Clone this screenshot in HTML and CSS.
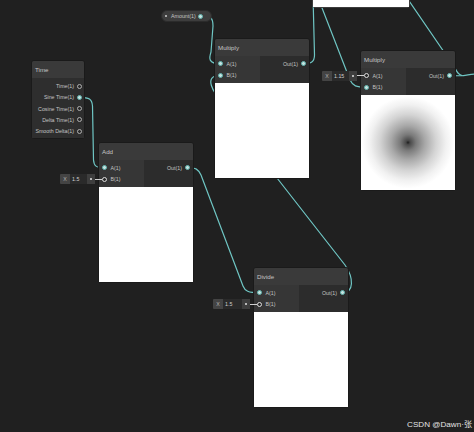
FILE: index.html
```html
<!DOCTYPE html>
<html>
<head>
<meta charset="utf-8">
<link rel="stylesheet" href="styles.css">
</head>
<body>
<div class="canvas">
  <svg class="edges" width="474" height="432" viewBox="0 0 474 432">
    <g fill="none" stroke="#6fc6c4" stroke-width="1.2">
      <path d="M 202 16 C 211 16, 213 18, 213 26 L 211 52 C 209 58, 208 63.75, 220.5 63.75"/>
      <path d="M 80 97.4 C 89 97.4, 92 99, 92.5 106 L 93.5 160 C 94 166, 96 167.75, 104.5 167.75"/>
      <path d="M 187.5 167.75 C 196 167.75, 198 169, 201 175 L 243 286 C 245 291, 248 292.75, 259.5 292.75"/>
      <path d="M 342.5 292.75 C 354 292.75, 354 278, 345 265 L 277 178 L 225 105 C 212 92, 203 75.25, 220.5 75.25"/>
      <path d="M 303.5 63.75 C 311 63.75, 314.5 62, 314.5 55 L 313 -5"/>
      <path d="M 317 -5 L 350 80 C 353 86, 356 87.25, 366.5 87.25"/>
      <path d="M 449.5 75.75 L 460 75.75 C 466 75.75, 470 74, 476 74"/>
      <path d="M 405 -5 L 455 68 C 457 72, 458 74.5, 462 75.5"/>
    </g>
  </svg>

  <div class="node topnode">
    <div class="preview"></div>
  </div>

  <div class="prop">
    <span class="pdot"></span>
    <span class="plabel">Amount(1)</span>
    <span class="dot c"></span>
  </div>

  <div class="node time">
    <div class="hdr">Time</div>
    <div class="tbody">
      <div class="port"><span>Time(1)</span><span class="dot o"></span></div>
      <div class="port"><span>Sine Time(1)</span><span class="dot c"></span></div>
      <div class="port"><span>Cosine Time(1)</span><span class="dot o"></span></div>
      <div class="port"><span>Delta Time(1)</span><span class="dot o"></span></div>
      <div class="port"><span>Smooth Delta(1)</span><span class="dot o"></span></div>
    </div>
  </div>

  <div class="node mul1">
    <div class="hdr">Multiply</div>
    <div class="body">
      <div class="ins">
        <div class="port"><span class="dot c"></span><span>A(1)</span></div>
        <div class="port"><span class="dot c"></span><span>B(1)</span></div>
      </div>
      <div class="outs">
        <div class="port"><span>Out(1)</span><span class="dot c"></span></div>
      </div>
    </div>
    <div class="preview"></div>
  </div>

  <div class="node mul2">
    <div class="hdr">Multiply</div>
    <div class="body">
      <div class="ins">
        <div class="port">
          <div class="field"><span class="fx">X</span><span class="fv">1.15</span><span class="fd"></span><span class="wire"></span></div>
          <span class="dot d"></span><span>A(1)</span>
        </div>
        <div class="port"><span class="dot c"></span><span>B(1)</span></div>
      </div>
      <div class="outs">
        <div class="port"><span>Out(1)</span><span class="dot c"></span></div>
      </div>
    </div>
    <div class="preview radial"></div>
  </div>

  <div class="node add">
    <div class="hdr">Add</div>
    <div class="body">
      <div class="ins">
        <div class="port"><span class="dot c"></span><span>A(1)</span></div>
        <div class="port">
          <div class="field"><span class="fx">X</span><span class="fv">1.5</span><span class="fd"></span><span class="wire"></span></div>
          <span class="dot d"></span><span>B(1)</span>
        </div>
      </div>
      <div class="outs">
        <div class="port"><span>Out(1)</span><span class="dot c"></span></div>
      </div>
    </div>
    <div class="preview"></div>
  </div>

  <div class="node divide">
    <div class="hdr">Divide</div>
    <div class="body">
      <div class="ins">
        <div class="port"><span class="dot c"></span><span>A(1)</span></div>
        <div class="port">
          <div class="field wide"><span class="fx">X</span><span class="fv">1.5</span><span class="fd"></span><span class="wire"></span></div>
          <span class="dot d"></span><span>B(1)</span>
        </div>
      </div>
      <div class="outs">
        <div class="port"><span>Out(1)</span><span class="dot c"></span></div>
      </div>
    </div>
    <div class="preview"></div>
  </div>

  <div class="wm">CSDN @Dawn·张</div>
</div>
</body>
</html>
```

FILE: styles.css
```css
* {
  box-sizing: border-box;
  margin: 0;
  padding: 0;
}

body {
  margin: 0;
  background: #202020;
  font-family: "Liberation Sans", Arial, sans-serif;
}

.canvas {
  position: relative;
  width: 474px;
  height: 432px;
  overflow: hidden;
  background: #202020;
}

.edges {
  position: absolute;
  left: 0;
  top: 0;
}

.node {
  position: absolute;
  width: 96px;
  border: 1px solid #1a1a1a;
  border-radius: 3px;
  background: #2d2d2d;
}

.hdr {
  height: 17px;
  background: #3a3a3a;
  color: #c6c6c6;
  font-size: 6.2px;
  padding-left: 3px;
  display: flex;
  align-items: center;
  border-radius: 2px 2px 0 0;
}

.body {
  display: flex;
  height: 27px;
}

.ins {
  width: 45px;
  background: #363636;
  padding: 2px 0;
}

.outs {
  flex: 1;
  background: #2c2c2c;
  padding: 2px 0;
}

.port {
  position: relative;
  height: 11.5px;
  display: flex;
  align-items: center;
  font-size: 5.3px;
  color: #c4c4c4;
  white-space: nowrap;
}

.ins .port {
  padding-left: 3px;
  gap: 3.5px;
}

.outs .port {
  justify-content: flex-end;
  padding-right: 3px;
  gap: 3px;
}

.dot {
  width: 5px;
  height: 5px;
  border-radius: 50%;
  flex: none;
}

.dot.c {
  background: #c6e2df;
  border: 1px solid #5fb3ae;
}

.dot.o {
  background: #2a2a2a;
  border: 1px solid #b0b0b0;
}

.dot.d {
  background: #2a2a2a;
  border: 1px solid #dedede;
}

.preview {
  height: 95px;
  background: #ffffff;
}

.radial {
  background: radial-gradient(circle at 50% 50%, #1c1c1c 0px, #484848 2px, #7a7a7a 8px, #a8a8a8 17px, #d4d4d4 28px, #f1f1f1 38px, #ffffff 46px);
}

/* default value fields */
.field {
  position: absolute;
  right: calc(100% - 3px);
  top: 50%;
  margin-top: -5px;
  height: 10px;
  display: flex;
  align-items: stretch;
}

.fx {
  width: 10px;
  background: #444444;
  color: #b2b2b2;
  font-size: 5.3px;
  display: flex;
  align-items: center;
  justify-content: center;
  border-radius: 1px 0 0 1px;
}

.fv {
  width: 17px;
  background: #2a2a2a;
  color: #cfcfcf;
  font-size: 5.3px;
  padding-left: 2px;
  display: flex;
  align-items: center;
}

.field.wide .fv {
  width: 19px;
}

.fd {
  width: 8px;
  background: #3e3e3e;
  display: flex;
  align-items: center;
  justify-content: center;
}

.fd::after {
  content: "";
  width: 2px;
  height: 2px;
  border-radius: 50%;
  background: #e2e2e2;
}

.wire {
  width: 7px;
  height: 1px;
  align-self: center;
  background: #d0d0d0;
}

/* property pill */
.prop {
  position: absolute;
  left: 161px;
  top: 10px;
  width: 51px;
  height: 12px;
  border-radius: 6px;
  background: #3d3d3d;
  border: 1px solid #2b2b2b;
  display: flex;
  align-items: center;
  padding-left: 2.5px;
  font-size: 5.3px;
  color: #c4c4c4;
  white-space: nowrap;
}

.pdot {
  width: 2px;
  height: 2px;
  border-radius: 50%;
  background: #d0d0d0;
  flex: none;
}

.plabel {
  margin-left: 4.5px;
  margin-right: 2.5px;
}

/* time node */
.time {
  left: 31px;
  top: 60px;
  width: 54px;
}

.tbody {
  background: #2e2e2e;
  padding: 2.5px 0 1px;
}

.tbody .port {
  height: 11.25px;
  justify-content: flex-end;
  padding-right: 2px;
  gap: 3px;
}

/* node placement on the graph canvas */
.mul1 {
  left: 214px;
  top: 38px;
}

.mul2 {
  left: 360px;
  top: 50px;
}

.add {
  left: 98px;
  top: 142px;
}

.divide {
  left: 253px;
  top: 267px;
}

.topnode {
  left: 312px;
  top: -89px;
  width: 98px;
  border-color: #3c3c3c;
}

.wm {
  position: absolute;
  right: 2px;
  bottom: 3px;
  font-size: 8.1px;
  color: #e4e4e4;
  font-family: "Liberation Sans", "Noto Sans CJK SC", sans-serif;
  white-space: nowrap;
}
```
